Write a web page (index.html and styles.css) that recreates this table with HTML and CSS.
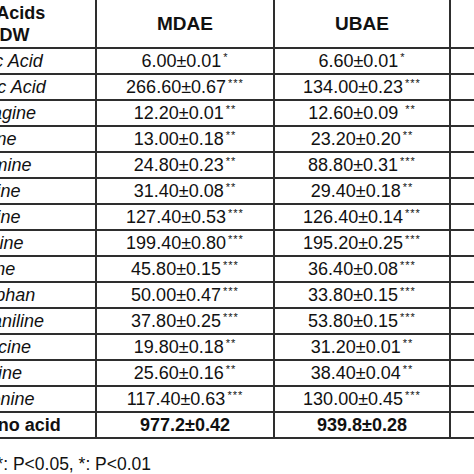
FILE: index.html
```html
<!DOCTYPE html>
<html>
<head>
<meta charset="utf-8">
<link rel="stylesheet" href="styles.css">
</head>
<body>
<div class="page">
<table class="aa">
<colgroup><col class="c1"><col class="c2"><col class="c3"><col class="c4"></colgroup>
<thead>
<tr class="head"><th class="name-h">Amino Acids<br>mg/g DW</th><th>MDAE</th><th>UBAE</th><th></th></tr>
</thead>
<tbody>
<tr><td class="name">Aspartic Acid</td><td>6.00±0.01<sup>*</sup></td><td>6.60±0.01<sup>*</sup></td><td></td></tr>
<tr><td class="name">Glutamic Acid</td><td>266.60±0.67<sup>***</sup></td><td>134.00±0.23<sup>***</sup></td><td></td></tr>
<tr><td class="name">Asparagine</td><td>12.20±0.01<sup>**</sup></td><td>12.60±0.09 <sup>**</sup></td><td></td></tr>
<tr><td class="name">Serine</td><td>13.00±0.18<sup>**</sup></td><td>23.20±0.20<sup>**</sup></td><td></td></tr>
<tr><td class="name">Glutamine</td><td>24.80±0.23<sup>**</sup></td><td>88.80±0.31<sup>***</sup></td><td></td></tr>
<tr><td class="name">Glycine</td><td>31.40±0.08<sup>**</sup></td><td>29.40±0.18<sup>**</sup></td><td></td></tr>
<tr><td class="name">Alanine</td><td>127.40±0.53<sup>***</sup></td><td>126.40±0.14<sup>***</sup></td><td></td></tr>
<tr><td class="name">Arginine</td><td>199.40±0.80<sup>***</sup></td><td>195.20±0.25<sup>***</sup></td><td></td></tr>
<tr><td class="name">Valine</td><td>45.80±0.15<sup>***</sup></td><td>36.40±0.08<sup>***</sup></td><td></td></tr>
<tr><td class="name">Tryptophan</td><td>50.00±0.47<sup>***</sup></td><td>33.80±0.15<sup>***</sup></td><td></td></tr>
<tr><td class="name">Phenylaniline</td><td>37.80±0.25<sup>***</sup></td><td>53.80±0.15<sup>***</sup></td><td></td></tr>
<tr><td class="name">Isoleucine</td><td>19.80±0.18<sup>**</sup></td><td>31.20±0.01<sup>**</sup></td><td></td></tr>
<tr><td class="name">Leucine</td><td>25.60±0.16<sup>**</sup></td><td>38.40±0.04<sup>**</sup></td><td></td></tr>
<tr><td class="name">Methionine</td><td>117.40±0.63<sup>***</sup></td><td>130.00±0.45<sup>***</sup></td><td></td></tr>
<tr class="total"><td class="name-t">Total amino acid</td><td>977.2±0.42</td><td>939.8±0.28</td><td></td></tr>
</tbody>
</table>
<p class="note">***: P&lt;0.001, **: P&lt;0.05, *: P&lt;0.01</p>
</div>
</body>
</html>
```
FILE: styles.css
```css
html, body {
  margin: 0;
  padding: 0;
  background: #ffffff;
  overflow: hidden;
}
.page {
  margin-left: -116px;
  font-family: "Liberation Sans", Arial, sans-serif;
  color: #111111;
  font-size: 18px;
}
.aa {
  border-collapse: collapse;
  table-layout: fixed;
  width: 745px;
}
.c1 { width: 211px; }
.c2 { width: 178px; }
.c3 { width: 176px; }
.c4 { width: 180px; }
.aa th, .aa td {
  border: 2px solid #2e2e2e;
  padding: 0;
  text-align: center;
  vertical-align: middle;
  white-space: nowrap;
  line-height: 22px;
}
.aa thead th {
  border-top: none;
  font-weight: bold;
  font-size: 19px;
  height: 47px;
}
.aa thead th.name-h {
  font-size: 18px;
}
.aa tbody td {
  height: 24px;
}
.name {
  font-style: italic;
}
.total td {
  font-weight: bold;
}
sup {
  font-size: 11px;
  line-height: 0;
  vertical-align: 6px;
  letter-spacing: 1px;
  margin-left: 2px;
}
.note {
  margin: 14px 0 0 0;
  white-space: nowrap;
  line-height: 22px;
  font-size: 17.5px;
}
```
